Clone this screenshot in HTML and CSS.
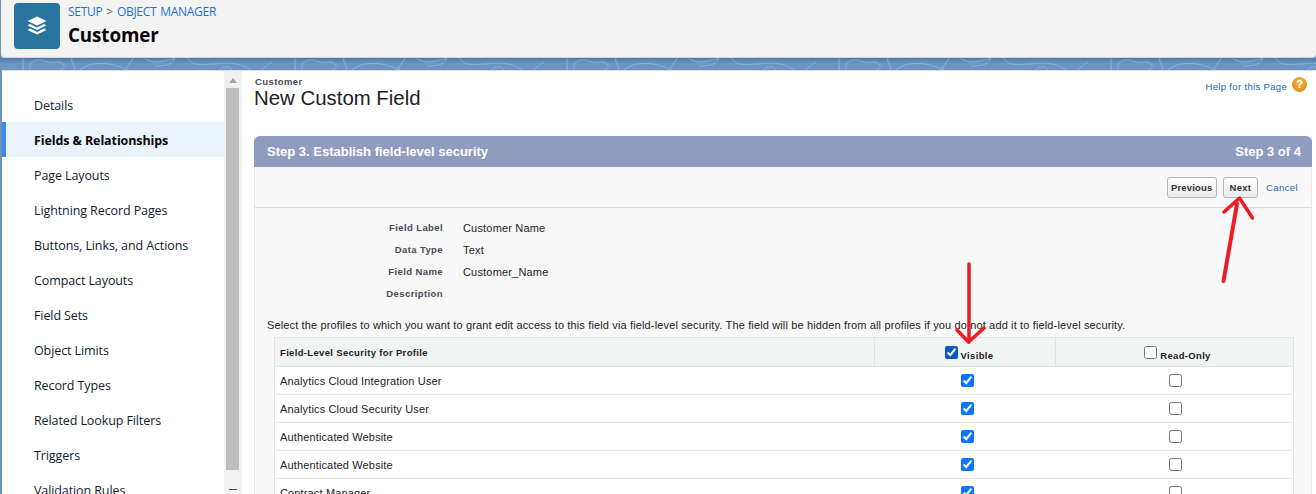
FILE: index.html
```html
<!DOCTYPE html>
<html lang="en">
<head>
<meta charset="utf-8">
<title>New Custom Field</title>
<link rel="stylesheet" href="styles.css">
</head>
<body>
<header class="top">
  <div class="tile">
    <svg width="22" height="20" viewBox="0 0 22 20"><path d="M11 0.500 20.500 5 11 9.500 1.500 5Z" fill="#fff"/><path d="M4 8 11 11.400 18 8 20.500 9.400 11 14 1.500 9.400Z" fill="#fff"/><path d="M4 12.600 11 16 18 12.600 20.500 14 11 18.500 1.500 14Z" fill="#fff"/></svg>
  </div>
  <div class="crumbs">
    <div class="crumb"><a>SETUP</a> <span>&gt;</span> <a>OBJECT MANAGER</a></div>
    <div class="obj">Customer</div>
  </div>
</header>
<div class="band">
  <svg class="topo" width="1316" height="12">
    <defs>
      <pattern id="topo" width="272" height="12" patternUnits="userSpaceOnUse" x="0" y="0">
        <path d="M23 0C22 4 24 8 23 12M30 12C28 4 36 0 44 3C52 6 58 2 63 6C66 9 63 11 60 12M72 0C70 4 76 8 74 12M80 12C90 4 105 4 118 8C123 10 126 11 128 12M125 12C128 7 132 3 133 0M145 0C150 6 165 4 175 0M175 0C172 6 168 8 155 8M187 0C195 10 205 6 215 6C235 3 245 8 250 12M220 12C224 8 228 7 232 12M262 12C266 8 270 5 272 4" fill="none" stroke="#a3bfda" stroke-opacity="0.6" stroke-width="1"/>
      </pattern>
    </defs>
    <rect width="1316" height="12" fill="url(#topo)"/>
  </svg>
</div>
<main class="page">
  <nav class="side">
    <ul class="menu">
      <li>Details</li>
      <li class="on">Fields &amp; Relationships</li>
      <li>Page Layouts</li>
      <li>Lightning Record Pages</li>
      <li>Buttons, Links, and Actions</li>
      <li>Compact Layouts</li>
      <li>Field Sets</li>
      <li>Object Limits</li>
      <li>Record Types</li>
      <li>Related Lookup Filters</li>
      <li>Triggers</li>
      <li>Validation Rules</li>
    </ul>
    <div class="bar">
      <i class="up"></i>
      <div class="thumb"></div>
      <i class="down"></i>
    </div>
  </nav>
  <section class="content">
    <div class="title-row">
      <div>
        <div class="kicker">Customer</div>
        <h1>New Custom Field</h1>
      </div>
      <div class="help"><a>Help for this Page</a><span class="q">?</span></div>
    </div>
    <div class="panel">
      <div class="phead"><span>Step 3. Establish field-level security</span><span>Step 3 of 4</span></div>
      <div class="actions">
        <button class="btn">Previous</button>
        <button class="btn next">Next</button>
        <a class="cancel">Cancel</a>
      </div>
      <div class="pbody">
        <dl class="facts">
          <dt>Field Label</dt><dd>Customer Name</dd>
          <dt>Data Type</dt><dd>Text</dd>
          <dt>Field Name</dt><dd>Customer_Name</dd>
          <dt>Description</dt><dd></dd>
        </dl>
        <p class="intro">Select the profiles to which you want to grant edit access to this field via field-level security. The field will be hidden from all profiles if you do not add it to field-level security.</p>
        <table class="grid">
          <colgroup><col class="c1"><col class="c2"><col class="c3"></colgroup>
          <thead>
            <tr>
              <th class="name">Field-Level Security for Profile</th>
              <th class="hv"><input class="head-box dark" type="checkbox" checked> Visible</th>
              <th class="hr"><input class="head-box" type="checkbox"> Read-Only</th>
            </tr>
          </thead>
          <tbody>
            <tr><td>Analytics Cloud Integration User</td><td class="v"><input type="checkbox" checked></td><td class="r"><input type="checkbox"></td></tr>
            <tr><td>Analytics Cloud Security User</td><td class="v"><input type="checkbox" checked></td><td class="r"><input type="checkbox"></td></tr>
            <tr><td>Authenticated Website</td><td class="v"><input type="checkbox" checked></td><td class="r"><input type="checkbox"></td></tr>
            <tr><td>Authenticated Website</td><td class="v"><input type="checkbox" checked></td><td class="r"><input type="checkbox"></td></tr>
            <tr><td>Contract Manager</td><td class="v"><input type="checkbox" checked></td><td class="r"><input type="checkbox"></td></tr>
          </tbody>
        </table>
      </div>
    </div>
  </section>
</main>
<svg class="marks" width="1316" height="494" viewBox="0 0 1316 494" fill="none" stroke="#ed1c24" stroke-linecap="round" stroke-linejoin="round">
  <path d="M1223.500 281 1237 204" stroke-width="4"/>
  <path d="M1224 212 1239.500 198 1252.500 218" stroke-width="3.500"/>
  <path d="M969 264V342" stroke-width="3.500"/>
  <path d="M957 330 968.500 342 984 328" stroke-width="3.500"/>
</svg>
</body>
</html>
```
FILE: styles.css
```css
* { box-sizing: border-box; }
html, body { margin: 0; height: 494px; overflow: hidden; }
body { background: #6b93bd; font-family: "Liberation Sans", Arial, sans-serif; color: #222; position: relative; }

.top { height: 58px; margin-left: 1px; background: #f3f3f3; border-radius: 0 0 4px 4px; border-bottom: 1px solid #cfd6de; display: flex; padding: 3px 0 0 13px; gap: 8px; }
.tile { width: 46px; height: 46px; background: #2b739f; border-radius: 4px; display: flex; align-items: center; justify-content: center; }
.crumb { font: 12px/18px "Open Sans", sans-serif; color: #1b72d8; letter-spacing: -0.3px; word-spacing: 1.200px; }
.crumb a { color: #1b72d8; }
.crumb span { color: #666; }
.obj { font: 700 18.800px/26px "Open Sans", sans-serif; color: #080707; margin-top: 1px; letter-spacing: -0.1px; }

.band { height: 12px; overflow: hidden; background: linear-gradient(#4d7dad, #6a95c3 45%, #6c96c2); }
.topo { display: block; }

.page { display: flex; height: 424px; margin-left: 2px; background: #fff; border-top: 1px solid #dde1e6; }
.side { width: 239px; display: flex; flex: none; }
.menu { list-style: none; margin: 0; padding: 16px 0 0; width: 222px; flex: none; overflow: hidden; background: #fff; }
.menu li { height: 35px; padding-left: 32px; font: 12.500px/37px "Open Sans", sans-serif; color: #111c2e; white-space: nowrap; letter-spacing: -0.1px; }
.menu li.on { background: #ebf3fc; border-left: 4px solid #3f8af0; padding-left: 28px; font-weight: 700; color: #080707; }
.bar { width: 17px; background: #f1f1f1; display: flex; flex-direction: column; align-items: center; }
.up { margin-top: 7px; width: 0; height: 0; border: 4px solid transparent; border-top: 0; border-bottom: 5px solid #a3a3a3; }
.thumb { width: 13px; height: 382px; margin-top: 5px; background: #bdbdbd; }
.down { margin-top: 19px; width: 8px; height: 1px; background: #505050; }

.content { flex: 1; min-width: 0; padding: 5px 4px 0 12px; font-size: 11px; border-left: 1px solid #eceef1; }
.title-row { display: flex; justify-content: space-between; height: 60px; }
.kicker { font-size: 9.500px; font-weight: 700; line-height: 12px; color: #4a4a56; letter-spacing: 0.4px; padding-left: 1px; }
h1 { margin: -2px 0 0; font-size: 20.400px; font-weight: 400; line-height: 24px; color: #222; }
.help { display: flex; align-items: flex-start; gap: 5px; padding: 0 5px 0 0; }
.help a { color: #1468b0; font-size: 9.500px; line-height: 12px; margin-top: 5px; letter-spacing: 0.33px; }
.q { width: 15px; height: 15px; margin-top: 1px; border-radius: 50%; background: radial-gradient(circle at 50% 35%, #f6b93a, #d9800f); color: #fff; font-size: 11px; font-weight: 700; line-height: 15px; text-align: center; }

.panel { background: #f8f8f8; border-right: 1px solid #e6e8eb; border-left: 1px solid #e6e8eb; height: 360px; }
.phead { height: 31px; margin: 0 -1px; background: #8e9dbf; border-radius: 6px 6px 0 0; color: #fff; font-size: 13px; font-weight: 700; display: flex; justify-content: space-between; align-items: center; padding: 0 11px 0 13px; }
.actions { height: 41px; border-bottom: 1px solid #dbdbdb; display: flex; justify-content: flex-end; align-items: center; gap: 6px; padding: 0 13px 0 0; }
.btn { height: 21px; padding: 0 3px; background: linear-gradient(#fdfdfd, #ececec); border: 1px solid #b5b5b5; border-radius: 3px; font: 700 9.500px "Liberation Sans", sans-serif; color: #333; letter-spacing: 0.2px; }
.next { padding: 0 6px; }
.cancel { color: #1468b0; font-size: 9.500px; margin-left: 2px; letter-spacing: 0.4px; }
.pbody { padding: 9px 0 0 12px; }
.facts { margin: 0; display: grid; grid-template-columns: 176px 1fr; grid-auto-rows: 22px; align-items: center; column-gap: 20px; }
.facts dt { font-size: 9.500px; font-weight: 700; color: #4a4a56; text-align: right; letter-spacing: 0.4px; margin-bottom: 2px; }
.facts dd { margin: 0; font-size: 11px; color: #222; letter-spacing: 0.18px; }
.intro { margin: 14px 0 0; font-size: 11px; line-height: 12px; color: #222; letter-spacing: 0.14px; white-space: nowrap; }
.grid { margin: 6px 0 0 7px; width: 1019px; table-layout: fixed; border-collapse: collapse; background: #fff; border: 1px solid #e0e3e5; }
.c1 { width: 600px; } .c2 { width: 181px; } .c3 { width: 238px; }
.grid th { height: 29px; background: #f2f3f3; border: 1px solid #e0e3e5; font-size: 9.500px; font-weight: 700; color: #222; text-align: center; padding: 0 0 5px; letter-spacing: 0.33px; vertical-align: bottom; }
.grid th.name { text-align: left; padding: 0 0 0 5px; vertical-align: middle; }
.grid th.hv { padding-left: 8px; }
.grid th.hr { padding-left: 6px; }
.grid td { height: 28px; border-bottom: 1px solid #e6e8ea; font-size: 11px; padding: 0 0 0 5px; color: #222; letter-spacing: 0.14px; }
.grid td.v { padding: 0 0 0 5px; text-align: center; }
.grid td.r { padding: 0 0 0 3px; text-align: center; }
input[type=checkbox] { margin: 0; width: 13px; height: 13px; vertical-align: middle; accent-color: #0b75ff; }
.head-box { vertical-align: 0 !important; }
.head-box.dark { accent-color: #0a58c2; }
.marks { position: absolute; left: 0; top: 0; pointer-events: none; }
```
